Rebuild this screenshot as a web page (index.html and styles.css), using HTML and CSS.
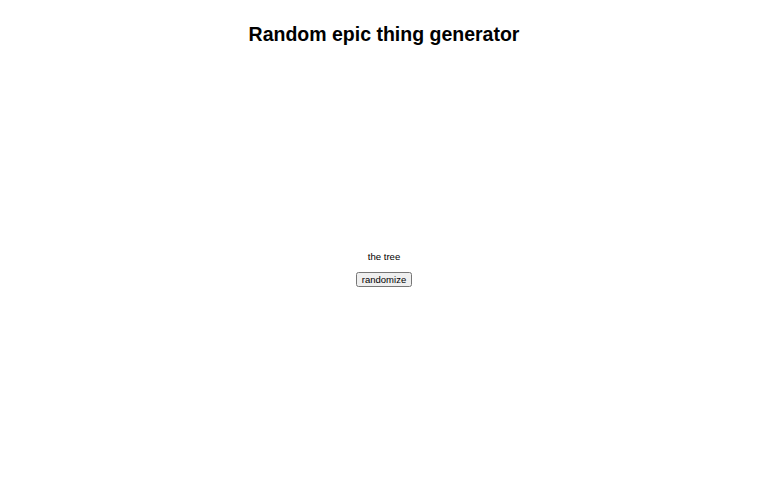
FILE: index.html
```html
<!DOCTYPE html>
<html lang="en">
<head>
    <meta charset="UTF-8" />
    <meta name="viewport" content="width=device-width, initial-scale=1.0" />
    <title>Random epic thing generator</title>
    <link rel="stylesheet" href="styles.css">
</head>
<body>
    <h1>Random epic thing generator</h1>
    <div class="stage"></div>
    <p id="thing" class="thing">the tree</p>
    <button onclick="randomize()">randomize</button>

    <script>
        const things = ['the tree', 'a dragon', 'the moon', 'an old sword', 'the mountain', 'a lost ship'];

        function randomize() {
            document.getElementById('thing').textContent = things[Math.floor(Math.random() * things.length)];
        }
    </script>
</body>
</html>
```

FILE: styles.css
```css
body {
    font-family: "Liberation Sans", Arial, sans-serif;
    margin: 0;
    text-align: center;
    background-color: #fff;
    color: #000;
}

h1 {
    font-size: 19.5px;
    margin: 23px 0 0;
}

/* space where the picture would go */
.stage {
    height: 205px;
}

.thing {
    font-size: 9.6px;
    margin: 0 0 7px;
}

button {
    font-family: "Liberation Sans", Arial, sans-serif;
    font-size: 9.5px;
    padding: 0 4px;
}
```
